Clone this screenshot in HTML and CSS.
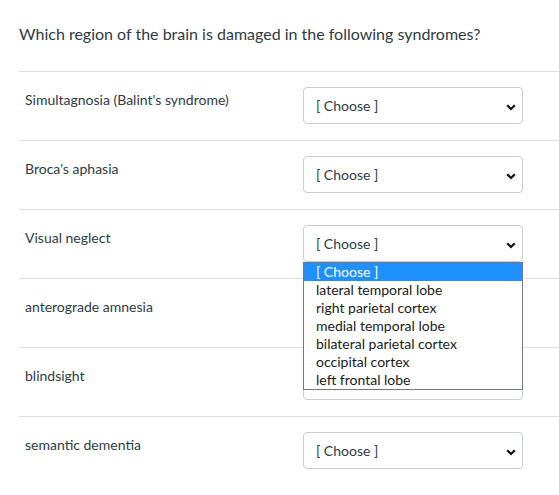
FILE: index.html
```html
<!DOCTYPE html>
<html>
<head>
<meta charset="utf-8">
<link rel="stylesheet" href="styles.css">
</head>
<body>
<div class="quiz">
  <div class="question-text">Which region of the brain is damaged in the following syndromes?</div>
  <div class="rows">
    <div class="row">
      <div class="label">Simultagnosia (Balint's syndrome)</div>
      <div class="select-wrap">
        <div class="select"><span>[ Choose ]</span><svg class="chev" width="10" height="7" viewBox="0 0 10 7"><path d="M1.2 1.3 L5 5 L8.8 1.3" fill="none" stroke="#111" stroke-width="2.2"/></svg></div>
      </div>
    </div>
    <div class="row">
      <div class="label">Broca's aphasia</div>
      <div class="select-wrap">
        <div class="select"><span>[ Choose ]</span><svg class="chev" width="10" height="7" viewBox="0 0 10 7"><path d="M1.2 1.3 L5 5 L8.8 1.3" fill="none" stroke="#111" stroke-width="2.2"/></svg></div>
      </div>
    </div>
    <div class="row">
      <div class="label">Visual neglect</div>
      <div class="select-wrap">
        <div class="select"><span>[ Choose ]</span><svg class="chev" width="10" height="7" viewBox="0 0 10 7"><path d="M1.2 1.3 L5 5 L8.8 1.3" fill="none" stroke="#111" stroke-width="2.2"/></svg></div>
        <div class="dropdown">
          <div class="option selected">[ Choose ]</div>
          <div class="option">lateral temporal lobe</div>
          <div class="option">right parietal cortex</div>
          <div class="option">medial temporal lobe</div>
          <div class="option">bilateral parietal cortex</div>
          <div class="option">occipital cortex</div>
          <div class="option">left frontal lobe</div>
        </div>
      </div>
    </div>
    <div class="row">
      <div class="label">anterograde amnesia</div>
      <div class="select-wrap">
        <div class="select"><span>[ Choose ]</span><svg class="chev" width="10" height="7" viewBox="0 0 10 7"><path d="M1.2 1.3 L5 5 L8.8 1.3" fill="none" stroke="#111" stroke-width="2.2"/></svg></div>
      </div>
    </div>
    <div class="row">
      <div class="label">blindsight</div>
      <div class="select-wrap">
        <div class="select"><span>[ Choose ]</span><svg class="chev" width="10" height="7" viewBox="0 0 10 7"><path d="M1.2 1.3 L5 5 L8.8 1.3" fill="none" stroke="#111" stroke-width="2.2"/></svg></div>
      </div>
    </div>
    <div class="row">
      <div class="label">semantic dementia</div>
      <div class="select-wrap">
        <div class="select"><span>[ Choose ]</span><svg class="chev" width="10" height="7" viewBox="0 0 10 7"><path d="M1.2 1.3 L5 5 L8.8 1.3" fill="none" stroke="#111" stroke-width="2.2"/></svg></div>
      </div>
    </div>
  </div>
</div>
</body>
</html>
```

FILE: styles.css
```css
html, body {
  margin: 0;
  padding: 0;
  background: #fff;
}
body {
  font-family: Lato, "Liberation Sans", sans-serif;
  color: #2d3b45;
}
.quiz {
  padding: 22px 0 0 19px;
}
.question-text {
  font-size: 16px;
  line-height: 24px;
  margin-bottom: 25px;
}
.row {
  display: flex;
  align-items: flex-start;
  border-top: 1px solid #dcdfe1;
  height: 68px;
}
.label {
  width: 278px;
  padding: 17px 0 0 6px;
  font-size: 14px;
  line-height: 21px;
}
.select-wrap {
  position: relative;
  margin-top: 15px;
}
.select {
  box-sizing: border-box;
  width: 220px;
  height: 37px;
  border: 1px solid #c7cdd1;
  border-radius: 4px;
  background: #fff;
  display: flex;
  align-items: center;
  justify-content: space-between;
  padding: 0 6px 0 12px;
  font-size: 14px;
}
.chev {
  display: block;
  margin-top: 3px;
}
.dropdown {
  position: absolute;
  left: 0;
  top: 37px;
  box-sizing: border-box;
  width: 220px;
  border: 1px solid #767676;
  background: #fff;
  z-index: 2;
}
.option {
  height: 18px;
  line-height: 17px;
  padding-left: 12px;
  font-size: 14px;
  color: #1a1a1a;
  white-space: nowrap;
}
.option.selected {
  background: #1e90ff;
  color: #fff;
}
```
